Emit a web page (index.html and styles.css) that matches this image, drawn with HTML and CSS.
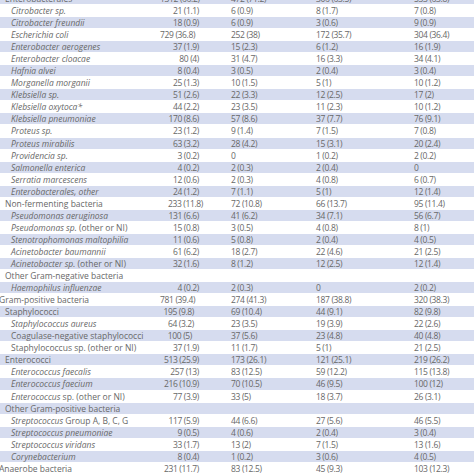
FILE: index.html
```html
<!DOCTYPE html>
<html>
<head>
<meta charset="utf-8">
<link rel="stylesheet" href="styles.css">
</head>
<body>
<div class="table">
  <div class="row shade"><div class="lab l1">Enterobacterales</div><div class="tot">1312 (66.2)</div><div class="c3">472 (71.2)</div><div class="c4">306 (63.5)</div><div class="c5">533 (63.8)</div></div>
  <div class="row"><div class="lab l2"><i>Citrobacter sp.</i></div><div class="tot">21 (1.1)</div><div class="c3">6 (0.9)</div><div class="c4">8 (1.7)</div><div class="c5">7 (0.8)</div></div>
  <div class="row shade"><div class="lab l2"><i>Citrobacter freundii</i></div><div class="tot">18 (0.9)</div><div class="c3">6 (0.9)</div><div class="c4">3 (0.6)</div><div class="c5">9 (0.9)</div></div>
  <div class="row"><div class="lab l2"><i>Escherichia coli</i></div><div class="tot s5">729 (36.8)</div><div class="c3">252 (38)</div><div class="c4">172 (35.7)</div><div class="c5">304 (36.4)</div></div>
  <div class="row shade"><div class="lab l2"><i>Enterobacter aerogenes</i></div><div class="tot">37 (1.9)</div><div class="c3">15 (2.3)</div><div class="c4">6 (1.2)</div><div class="c5">16 (1.9)</div></div>
  <div class="row"><div class="lab l2"><i>Enterobacter cloacae</i></div><div class="tot">80 (4)</div><div class="c3">31 (4.7)</div><div class="c4">16 (3.3)</div><div class="c5">34 (4.1)</div></div>
  <div class="row shade"><div class="lab l2"><i>Hafnia alvei</i></div><div class="tot">8 (0.4)</div><div class="c3">3 (0.5)</div><div class="c4">2 (0.4)</div><div class="c5">3 (0.4)</div></div>
  <div class="row"><div class="lab l2"><i>Morganella morganii</i></div><div class="tot">25 (1.3)</div><div class="c3">10 (1.5)</div><div class="c4">5 (1)</div><div class="c5">10 (1.2)</div></div>
  <div class="row shade"><div class="lab l2"><i>Klebsiella sp.</i></div><div class="tot">51 (2.6)</div><div class="c3">22 (3.3)</div><div class="c4">12 (2.5)</div><div class="c5">17 (2)</div></div>
  <div class="row"><div class="lab l2"><i>Klebsiella oxytoca*</i></div><div class="tot">44 (2.2)</div><div class="c3">23 (3.5)</div><div class="c4">11 (2.3)</div><div class="c5">10 (1.2)</div></div>
  <div class="row shade"><div class="lab l2"><i>Klebsiella pneumoniae</i></div><div class="tot">170 (8.6)</div><div class="c3">57 (8.6)</div><div class="c4">37 (7.7)</div><div class="c5">76 (9.1)</div></div>
  <div class="row"><div class="lab l2"><i>Proteus sp.</i></div><div class="tot">23 (1.2)</div><div class="c3">9 (1.4)</div><div class="c4">7 (1.5)</div><div class="c5">7 (0.8)</div></div>
  <div class="row shade"><div class="lab l2"><i>Proteus mirabilis</i></div><div class="tot">63 (3.2)</div><div class="c3">28 (4.2)</div><div class="c4">15 (3.1)</div><div class="c5">20 (2.4)</div></div>
  <div class="row"><div class="lab l2"><i>Providencia sp.</i></div><div class="tot">3 (0.2)</div><div class="c3">0</div><div class="c4">1 (0.2)</div><div class="c5">2 (0.2)</div></div>
  <div class="row shade"><div class="lab l2"><i>Salmonella enterica</i></div><div class="tot">4 (0.2)</div><div class="c3">2 (0.3)</div><div class="c4">2 (0.4)</div><div class="c5">0</div></div>
  <div class="row"><div class="lab l2"><i>Serratia marcescens</i></div><div class="tot">12 (0.6)</div><div class="c3">2 (0.3)</div><div class="c4">4 (0.8)</div><div class="c5">6 (0.7)</div></div>
  <div class="row shade"><div class="lab l2"><i>Enterobacterales, other</i></div><div class="tot">24 (1.2)</div><div class="c3">7 (1.1)</div><div class="c4">5 (1)</div><div class="c5">12 (1.4)</div></div>
  <div class="row"><div class="lab l1">Non-fermenting bacteria</div><div class="tot sm4">233 (11.8)</div><div class="c3">72 (10.8)</div><div class="c4">66 (13.7)</div><div class="c5">95 (11.4)</div></div>
  <div class="row shade"><div class="lab l2"><i>Pseudomonas aeruginosa</i></div><div class="tot">131 (6.6)</div><div class="c3">41 (6.2)</div><div class="c4">34 (7.1)</div><div class="c5">56 (6.7)</div></div>
  <div class="row"><div class="lab l2"><i>Pseudomonas sp.</i> (other or NI)</div><div class="tot">15 (0.8)</div><div class="c3">3 (0.5)</div><div class="c4">4 (0.8)</div><div class="c5">8 (1)</div></div>
  <div class="row shade"><div class="lab l2"><i>Stenotrophomonas maltophilia</i></div><div class="tot">11 (0.6)</div><div class="c3">5 (0.8)</div><div class="c4">2 (0.4)</div><div class="c5">4 (0.5)</div></div>
  <div class="row"><div class="lab l2"><i>Acinetobacter baumannii</i></div><div class="tot">61 (6.2)</div><div class="c3">18 (2.7)</div><div class="c4">22 (4.6)</div><div class="c5">21 (2.5)</div></div>
  <div class="row shade"><div class="lab l2"><i>Acinetobacter sp.</i> (other or NI)</div><div class="tot">32 (1.6)</div><div class="c3">8 (1.2)</div><div class="c4">12 (2.5)</div><div class="c5">12 (1.4)</div></div>
  <div class="row"><div class="lab l1">Other Gram-negative bacteria</div><div class="tot"></div><div class="c3"></div><div class="c4"></div><div class="c5"></div></div>
  <div class="row shade"><div class="lab l2"><i>Haemophilus influenzae</i></div><div class="tot">4 (0.2)</div><div class="c3">2 (0.3)</div><div class="c4">0</div><div class="c5">2 (0.2)</div></div>
  <div class="row"><div class="lab l0">Gram-positive bacteria</div><div class="tot s4">781 (39.4)</div><div class="c3">274 (41.3)</div><div class="c4">187 (38.8)</div><div class="c5">320 (38.3)</div></div>
  <div class="row shade"><div class="lab l1">Staphylococci</div><div class="tot s5">195 (9.8)</div><div class="c3">69 (10.4)</div><div class="c4">44 (9.1)</div><div class="c5">82 (9.8)</div></div>
  <div class="row"><div class="lab l2"><i>Staphylococcus aureus</i></div><div class="tot s5">64 (3.2)</div><div class="c3">23 (3.5)</div><div class="c4">19 (3.9)</div><div class="c5">22 (2.6)</div></div>
  <div class="row shade"><div class="lab l2">Coagulase-negative staphylococci</div><div class="tot s7">100 (5)</div><div class="c3">37 (5.6)</div><div class="c4">23 (4.8)</div><div class="c5">40 (4.8)</div></div>
  <div class="row"><div class="lab l2">Staphylococcus sp. (other or NI)</div><div class="tot">37 (1.9)</div><div class="c3">11 (1.7)</div><div class="c4">5 (1)</div><div class="c5">21 (2.5)</div></div>
  <div class="row shade"><div class="lab l1">Enterococci</div><div class="tot">513 (25.9)</div><div class="c3">173 (26.1)</div><div class="c4">121 (25.1)</div><div class="c5">219 (26.2)</div></div>
  <div class="row"><div class="lab l2"><i>Enterococcus faecalis</i></div><div class="tot">257 (13)</div><div class="c3">83 (12.5)</div><div class="c4">59 (12.2)</div><div class="c5">115 (13.8)</div></div>
  <div class="row shade"><div class="lab l2"><i>Enterococcus faecium</i></div><div class="tot">216 (10.9)</div><div class="c3">70 (10.5)</div><div class="c4">46 (9.5)</div><div class="c5">100 (12)</div></div>
  <div class="row"><div class="lab l2"><i>Enterococcus</i> sp. (other or NI)</div><div class="tot">77 (3.9)</div><div class="c3">33 (5)</div><div class="c4">18 (3.7)</div><div class="c5">26 (3.1)</div></div>
  <div class="row shade"><div class="lab l1">Other Gram-positive bacteria</div><div class="tot"></div><div class="c3"></div><div class="c4"></div><div class="c5"></div></div>
  <div class="row"><div class="lab l2"><i>Streptococcus</i> Group A, B, C, G</div><div class="tot">117 (5.9)</div><div class="c3">44 (6.6)</div><div class="c4">27 (5.6)</div><div class="c5">46 (5.5)</div></div>
  <div class="row shade"><div class="lab l2"><i>Streptococcus pneumoniae</i></div><div class="tot">9 (0.5)</div><div class="c3">4 (0.6)</div><div class="c4">2 (0.4)</div><div class="c5">3 (0.4)</div></div>
  <div class="row"><div class="lab l2"><i>Streptococcus viridans</i></div><div class="tot">33 (1.7)</div><div class="c3">13 (2)</div><div class="c4">7 (1.5)</div><div class="c5">13 (1.6)</div></div>
  <div class="row shade"><div class="lab l2"><i>Corynebacterium</i></div><div class="tot">8 (0.4)</div><div class="c3">1 (0.2)</div><div class="c4">3 (0.6)</div><div class="c5">4 (0.5)</div></div>
  <div class="row"><div class="lab l0">Anaerobe bacteria</div><div class="tot">231 (11.7)</div><div class="c3">83 (12.5)</div><div class="c4">45 (9.3)</div><div class="c5">103 (12.3)</div></div>
</div>
</body>
</html>
```

FILE: styles.css
```css
html, body {
  margin: 0;
  padding: 0;
  background: #ffffff;
}
body {
  width: 474px;
  height: 474px;
  overflow: hidden;
  font-family: "Open Sans", "Liberation Sans", sans-serif;
  font-size: 8.5px;
  color: #686868;
}
.table {
  margin-top: -7.06px;
}
.row {
  display: grid;
  grid-template-columns: 160px 39px 117px 98px 1fr;
  height: 12.06px;
  box-sizing: border-box;
  border-bottom: 1px solid #ffffff;
  align-items: center;
  white-space: nowrap;
  line-height: 11px;
}
.shade {
  background: #d6dcef;
}
.lab { overflow: visible; }
.l0 { margin-left: -1px; }
.l1 { padding-left: 5px; }
.l2 { padding-left: 11px; }
.tot, .c3, .c4, .c5 { letter-spacing: -0.35px; }
.tot { text-align: right; }
.s4 { padding-right: 4px; }
.s5 { padding-right: 5px; }
.s7 { padding-right: 7px; }
.sm4 { margin-right: -4px; }
.c3 { padding-left: 32px; }
.c4, .c5 { padding-left: 0; }
```
